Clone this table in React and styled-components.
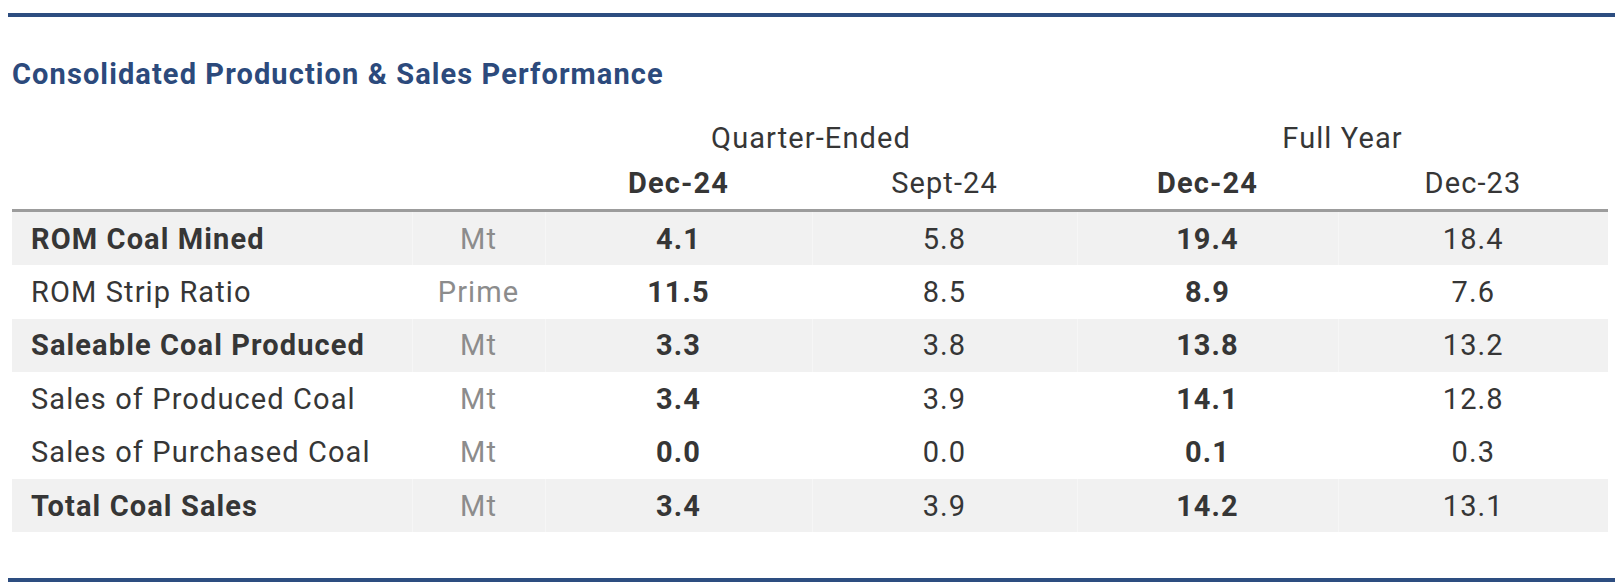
import styled, { createGlobalStyle } from "styled-components";

const GlobalStyle = createGlobalStyle`
  body {
    margin: 0;
    background: #ffffff;
    font-family: Roboto, "Noto Sans", sans-serif;
  }
`;

const Page = styled.div`
  width: 1624px;
  padding: 13px 0 0 8px;
  box-sizing: border-box;
`;

const Rule = styled.div`
  width: 1607px;
  height: 4px;
  background: #2d4d80;
`;

const Section = styled.div`
  padding: 40px 0 46px 4px;
`;

const Title = styled.h2`
  margin: 0 0 25px;
  font-size: 29px;
  line-height: 34px;
  letter-spacing: 1.1px;
  font-weight: 700;
  color: #2c4a7c;
`;

const Table = styled.table`
  width: 1596px;
  table-layout: fixed;
  border-collapse: collapse;
  font-size: 29px;
  letter-spacing: 1.1px;
  color: #363636;
`;

const GroupHead = styled.th`
  height: 44px;
  padding: 0;
  font-weight: 400;
  text-align: center;
  vertical-align: middle;
`;

const ColHead = styled.th`
  height: 45px;
  padding: 0 0 4px;
  font-weight: ${(p) => (p.$bold ? 700 : 400)};
  text-align: center;
  vertical-align: middle;
  border-bottom: 3px solid #9c9c9c;
`;

const Row = styled.tr`
  background: ${(p) => (p.$shaded ? "#f1f1f1" : "transparent")};
`;

const Label = styled.td`
  height: 53.4px;
  padding: 0 0 0 19px;
  font-weight: ${(p) => (p.$bold ? 700 : 400)};
  white-space: nowrap;
`;

const Unit = styled.td`
  padding: 0;
  text-align: center;
  color: #8c8c8c;
  border-left: 1px solid rgba(255, 255, 255, 0.35);
`;

const Value = styled.td`
  padding: 0;
  text-align: center;
  font-weight: ${(p) => (p.$bold ? 700 : 400)};
  border-left: 1px solid rgba(255, 255, 255, 0.35);
`;

const rows = [
  { label: "ROM Coal Mined", unit: "Mt", bold: true, values: ["4.1", "5.8", "19.4", "18.4"] },
  { label: "ROM Strip Ratio", unit: "Prime", bold: false, values: ["11.5", "8.5", "8.9", "7.6"] },
  { label: "Saleable Coal Produced", unit: "Mt", bold: true, values: ["3.3", "3.8", "13.8", "13.2"] },
  { label: "Sales of Produced Coal", unit: "Mt", bold: false, values: ["3.4", "3.9", "14.1", "12.8"] },
  { label: "Sales of Purchased Coal", unit: "Mt", bold: false, values: ["0.0", "0.0", "0.1", "0.3"] },
  { label: "Total Coal Sales", unit: "Mt", bold: true, values: ["3.4", "3.9", "14.2", "13.1"] },
];

const periods = [
  { label: "Dec-24", bold: true },
  { label: "Sept-24", bold: false },
  { label: "Dec-24", bold: true },
  { label: "Dec-23", bold: false },
];

const App = () => {
  return (
    <>
      <GlobalStyle />
      <Page>
        <Rule />
        <Section>
          <Title>Consolidated Production &amp; Sales Performance</Title>
          <Table>
            <colgroup>
              <col style={{ width: 400 }} />
              <col style={{ width: 133 }} />
              <col style={{ width: 267 }} />
              <col style={{ width: 265 }} />
              <col style={{ width: 261 }} />
              <col style={{ width: 270 }} />
            </colgroup>
            <thead>
              <tr>
                <GroupHead />
                <GroupHead />
                <GroupHead colSpan={2}>Quarter-Ended</GroupHead>
                <GroupHead colSpan={2}>Full Year</GroupHead>
              </tr>
              <tr>
                <ColHead />
                <ColHead />
                {periods.map((p, i) => (
                  <ColHead key={i} $bold={p.bold}>
                    {p.label}
                  </ColHead>
                ))}
              </tr>
            </thead>
            <tbody>
              {rows.map((r) => (
                <Row key={r.label} $shaded={r.bold}>
                  <Label $bold={r.bold}>{r.label}</Label>
                  <Unit>{r.unit}</Unit>
                  {r.values.map((v, i) => (
                    <Value key={i} $bold={i % 2 === 0}>
                      {v}
                    </Value>
                  ))}
                </Row>
              ))}
            </tbody>
          </Table>
        </Section>
        <Rule />
      </Page>
    </>
  );
};

export default App;
